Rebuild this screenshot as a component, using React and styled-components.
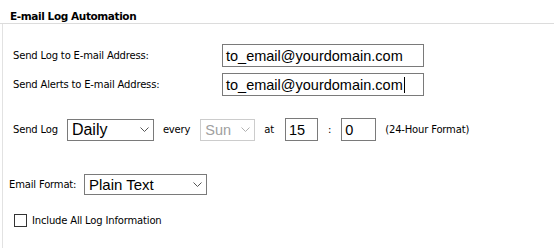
import React from "react";
import styled, { createGlobalStyle } from "styled-components";

const Global = createGlobalStyle`
  html, body { margin: 0; padding: 0; background: #fff; }
  body { font-family: "Liberation Sans", Arial, sans-serif; }
`;

const Panel = styled.div`
  width: 554px;
  height: 248px;
  position: relative;
  overflow: hidden;
  background: #fff;
`;

const Title = styled.div`
  font-family: "DejaVu Sans", Verdana, sans-serif;
  font-weight: bold;
  font-size: 10.5px;
  letter-spacing: -0.4px;
  color: #000;
  padding: 10px 0 0 10px;
  height: 13px;
  line-height: 13px;
  border-bottom: 1px solid #dcdcdc;
`;

const Body = styled.div`
  margin-left: 2px;
  border-left: 1px solid #e2e2e2;
  height: 224px;
  display: flex;
  flex-direction: column;
`;

const Label = styled.span`
  font-family: "DejaVu Sans", Verdana, sans-serif;
  font-size: 10px;
  letter-spacing: -0.17px;
  color: #000;
  white-space: nowrap;
`;

const FieldRow = styled.div`
  display: flex;
  align-items: center;
  height: 23px;
  margin-top: ${(p) => p.$top}px;
  padding-left: ${(p) => p.$left}px;
`;

const FixedLabel = styled(Label)`
  width: ${(p) => p.$w}px;
  flex: none;
`;

const TextBox = styled.div`
  box-sizing: border-box;
  width: ${(p) => p.$w}px;
  height: ${(p) => p.$h || 23}px;
  border: 1px solid #7a7a7a;
  background: #fff;
  font-family: "Liberation Sans", Arial, sans-serif;
  font-size: 14.5px;
  color: #000;
  padding-left: 3px;
  display: flex;
  align-items: center;
  margin-left: ${(p) => p.$ml || 0}px;
  flex: none;
`;

const Caret = styled.span`
  display: inline-block;
  width: 1px;
  height: 16px;
  background: #000;
  margin-left: 1px;
`;

const Select = styled.div`
  box-sizing: border-box;
  width: ${(p) => p.$w}px;
  height: ${(p) => p.$h || 22}px;
  border: 1px solid ${(p) => (p.$disabled ? "#cccccc" : "#7a7a7a")};
  background: #fff;
  color: ${(p) => (p.$disabled ? "#a0a0a0" : "#000")};
  font-family: "Liberation Sans", Arial, sans-serif;
  font-size: ${(p) => p.$fs || 16}px;
  padding-left: ${(p) => p.$pl || 4}px;
  padding-right: 4px;
  display: flex;
  align-items: center;
  justify-content: space-between;
  margin-left: ${(p) => p.$ml || 0}px;
  flex: none;
`;

const Chevron = ({ color }) => (
  <svg width="9" height="6" viewBox="0 0 9 6">
    <path d="M0.5 0.5 L4.5 4.5 L8.5 0.5" fill="none" stroke={color} strokeWidth="1" />
  </svg>
);

const Gap = styled.span`
  margin-left: ${(p) => p.$ml}px;
  display: inline-flex;
  align-items: center;
`;

const CheckRow = styled.div`
  display: flex;
  align-items: center;
  margin-top: ${(p) => p.$top}px;
  padding-left: 11px;
`;

const Box = styled.span`
  box-sizing: border-box;
  width: 13px;
  height: 13px;
  border: 1px solid #333;
  background: #fff;
  margin-right: 5px;
  flex: none;
`;

export default function App() {
  return (
    <Panel>
      <Global />
      <Title>E-mail Log Automation</Title>
      <Body>
        <FieldRow $top={20} $left={10}>
          <FixedLabel $w={209}>Send Log to E-mail Address:</FixedLabel>
          <TextBox $w={202}>to_email@yourdomain.com</TextBox>
        </FieldRow>
        <FieldRow $top={6} $left={10}>
          <FixedLabel $w={209}>Send Alerts to E-mail Address:</FixedLabel>
          <TextBox $w={202}>
            to_email@yourdomain.com<Caret />
          </TextBox>
        </FieldRow>
        <FieldRow $top={22} $left={10}>
          <Label>Send Log</Label>
          <Select $w={87} $ml={9}>
            <span>Daily</span>
            <Chevron color="#555" />
          </Select>
          <Gap $ml={9}><Label>every</Label></Gap>
          <Select $w={55} $ml={10} $disabled $fs={14.5}>
            <span>Sun</span>
            <Chevron color="#b0b0b0" />
          </Select>
          <Gap $ml={9}><Label>at</Label></Gap>
          <TextBox $w={33} $ml={11} $h={23}>15</TextBox>
          <Gap $ml={10}><Label>:</Label></Gap>
          <TextBox $w={35} $ml={10} $h={23}>0</TextBox>
          <Gap $ml={9}><Label>(24-Hour Format)</Label></Gap>
        </FieldRow>
        <FieldRow $top={32} $left={6}>
          <FixedLabel $w={75}>Email Format:</FixedLabel>
          <Select $w={123} $h={21} $fs={15}>
            <span>Plain Text</span>
            <Chevron color="#555" />
          </Select>
        </FieldRow>
        <CheckRow $top={18}>
          <Box />
          <Label>Include All Log Information</Label>
        </CheckRow>
      </Body>
    </Panel>
  );
}
